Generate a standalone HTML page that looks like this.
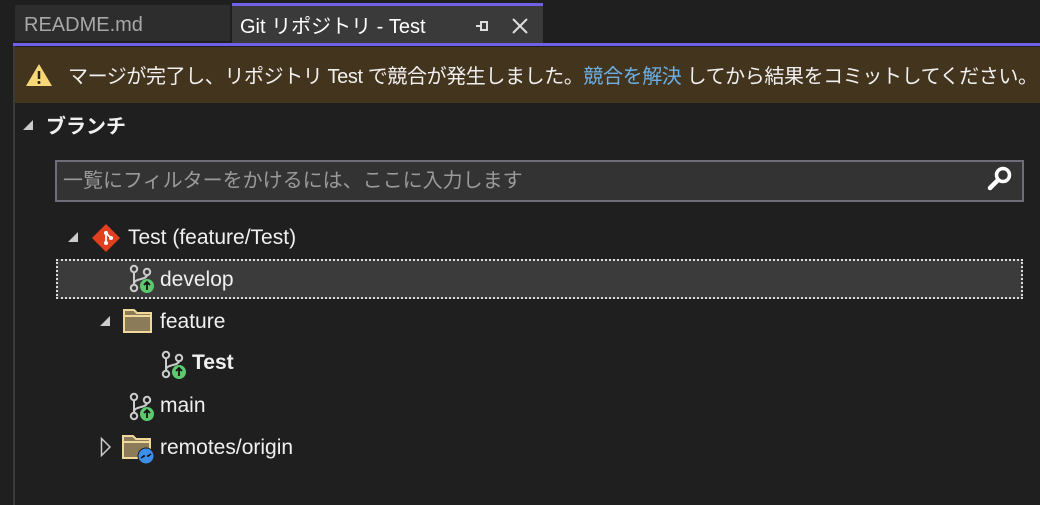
<!DOCTYPE html>
<html><head><meta charset="utf-8"><style>
body{margin:0;width:1040px;height:505px;background:#1f1f1f;overflow:hidden;font-family:"Liberation Sans","Noto Sans CJK JP",sans-serif;color:#f0f0f0;position:relative}
.a{position:absolute;white-space:nowrap}
</style></head><body>
<div class="a" style="left:15px;top:5px;width:215px;height:36px;background:#2d2d2d;color:#a8a8a8;font-size:20px;line-height:40px;padding-left:9px;box-sizing:border-box">README.md</div>
<div class="a" style="left:232px;top:3px;width:311px;height:41px;background:#3a3a3a;border-top:3px solid #7160e8;box-sizing:border-box;font-size:20px;line-height:42px;padding-left:8px;color:#fff">Git リポジトリ - Test</div>
<svg class="a" style="left:474px;top:18px" width="16" height="16"><path d="M2 8h5M7 3v10M7 4h6v8H7" stroke="#ddd" stroke-width="2" fill="none"/></svg>
<svg class="a" style="left:511px;top:17px" width="18" height="18"><path d="M2 2L16 16M16 2L2 16" stroke="#ddd" stroke-width="2"/></svg>
<div class="a" style="left:13px;top:43px;width:1027px;height:3px;background:#7160e8"></div>
<div class="a" style="left:13px;top:46px;width:2px;height:459px;background:#3a3a3a"></div>
<div class="a" style="left:15px;top:47px;width:1025px;height:56px;background:#43341d"></div>
<svg class="a" style="left:25px;top:62px" width="28" height="26"><path d="M14 2L27 24H1Z" fill="#f8d776"/><path d="M14 9v8" stroke="#222" stroke-width="2.5"/><circle cx="14" cy="20.5" r="1.5" fill="#222"/></svg>
<div class="a" style="left:68px;top:62px;font-size:20px;line-height:30px;color:#f0f0f0;letter-spacing:-0.4px">マージが完了し、リポジトリ Test で競合が発生しました。<span style="color:#6cb0e6">競合を解決</span> してから結果をコミットしてください。</div>
<svg class="a" style="left:22px;top:119px" width="12" height="12"><path d="M11 1V11H1Z" fill="#ccc"/></svg>
<div class="a" style="left:46px;top:113px;font-size:20px;line-height:28px;font-weight:bold">ブランチ</div>
<div class="a" style="left:55px;top:160px;width:969px;height:42px;background:#333;border:2px solid #6e6e78;box-sizing:border-box"></div>
<div class="a" style="left:63px;top:167px;font-size:20px;line-height:28px;color:#9a9a9a">一覧にフィルターをかけるには、ここに入力します</div>
<svg class="a" style="left:986px;top:164px" width="28" height="28"><circle cx="17" cy="11" r="6.5" stroke="#fff" stroke-width="3.5" fill="none"/><path d="M12 16L4 24" stroke="#fff" stroke-width="4.5" stroke-linecap="round"/></svg>
<svg class="a" style="left:67px;top:231px" width="12" height="12"><path d="M11 1V11H1Z" fill="#ccc"/></svg>
<svg class="a" style="left:91px;top:223px" width="30" height="30"><path d="M15 1L29 15L15 29L1 15Z" fill="#e2401f"/><circle cx="15" cy="10" r="2" fill="#fff"/><circle cx="15" cy="20" r="2" fill="#fff"/><circle cx="20" cy="15" r="2" fill="#fff"/><path d="M15 10v10M15 10l5 5" stroke="#fff" stroke-width="1.8"/></svg>
<div class="a" style="left:128px;top:224px;font-size:21px;line-height:28px">Test (feature/Test)</div>
<div class="a" style="left:56px;top:259px;width:967px;height:40px;background:#3b3b3b;border:2px dotted #ddd;box-sizing:border-box"></div>
<svg width="0" height="0" style="position:absolute"><defs><g id="br"><circle cx="6" cy="5" r="3.2" stroke="#ccc" stroke-width="2" fill="none"/><circle cx="6" cy="24" r="3.2" stroke="#ccc" stroke-width="2" fill="none"/><circle cx="19" cy="8" r="3.2" stroke="#ccc" stroke-width="2" fill="none"/><path d="M6 8v13M6 20c0-6 13-4 13-9" stroke="#ccc" stroke-width="2" fill="none"/><circle cx="19" cy="22" r="7" fill="#5cc96e"/><path d="M19 26v-7M16 21l3-3 3 3" stroke="#111" stroke-width="1.8" fill="none"/></g></defs></svg>
<svg class="a" style="left:128px;top:264px" width="28" height="32"><use href="#br"/></svg>
<div class="a" style="left:160px;top:266px;font-size:21px;line-height:28px">develop</div>
<svg class="a" style="left:99px;top:315px" width="12" height="12"><path d="M11 1V11H1Z" fill="#ccc"/></svg>
<svg class="a" style="left:123px;top:308px" width="30" height="26"><path d="M1 2h10l3 3h14v19H1Z" fill="#8c7b58" stroke="#f0d79a" stroke-width="2"/><path d="M1 8h27" stroke="#f0d79a" stroke-width="2"/></svg>
<div class="a" style="left:160px;top:308px;font-size:21px;line-height:28px">feature</div>
<svg class="a" style="left:160px;top:350px" width="28" height="32"><use href="#br"/></svg>
<div class="a" style="left:192px;top:349px;font-size:21px;line-height:28px;font-weight:bold">Test</div>
<svg class="a" style="left:128px;top:392px" width="28" height="32"><use href="#br"/></svg>
<div class="a" style="left:160px;top:392px;font-size:21px;line-height:28px">main</div>
<svg class="a" style="left:100px;top:437px" width="12" height="20"><path d="M1.5 1.5L10 10L1.5 18.5Z" fill="none" stroke="#ccc" stroke-width="1.5"/></svg>
<svg class="a" style="left:122px;top:434px" width="34" height="32"><path d="M1 2h10l3 3h14v19H1Z" fill="#8c7b58" stroke="#f0d79a" stroke-width="2"/><path d="M1 8h27" stroke="#f0d79a" stroke-width="2"/><circle cx="24" cy="22" r="8" fill="#3b8eea" stroke="#1f1f1f" stroke-width="1"/><path d="M19 24l3-2M29 20l-3 2M22 21v2M26 21v2" stroke="#111" stroke-width="1.6"/></svg>
<div class="a" style="left:160px;top:434px;font-size:21px;line-height:28px">remotes/origin</div>
</body></html>
